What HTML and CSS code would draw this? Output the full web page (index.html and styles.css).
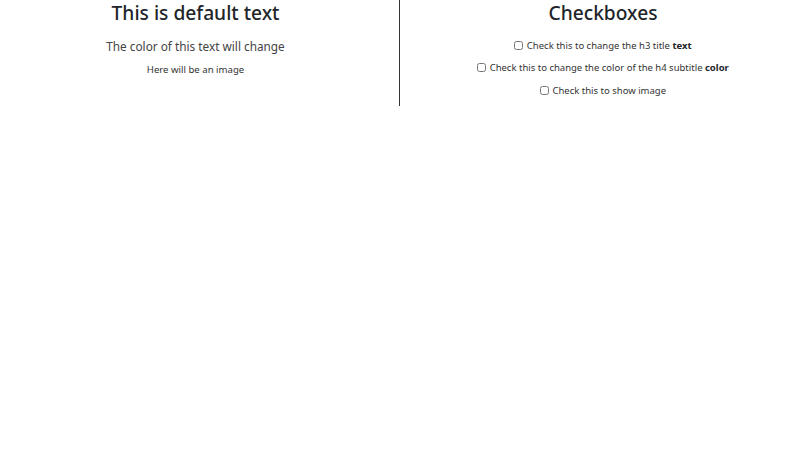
FILE: index.html
```html
<!DOCTYPE html>
<html>
<head>
<meta charset="utf-8">
<link rel="stylesheet" href="styles.css">
</head>
<body>
<div class="row">
  <div class="col col-left">
    <h3 class="title">This is default text</h3>
    <h4 class="subtitle">The color of this text will change</h4>
    <p class="note">Here will be an image</p>
  </div>
  <div class="col col-right">
    <h3 class="title">Checkboxes</h3>
    <label class="check"><input type="checkbox"> Check this to change the h3 title <b>text</b></label>
    <label class="check"><input type="checkbox"> Check this to change the color of the h4 subtitle <b>color</b></label>
    <label class="check"><input type="checkbox"> Check this to show image</label>
  </div>
</div>
</body>
</html>
```
FILE: styles.css
```css
html, body {
  margin: 0;
  padding: 0;
  background: #fff;
  color: #212529;
  font-family: "Noto Sans", "Open Sans", sans-serif;
}
.row {
  display: flex;
}
.col {
  width: 50%;
  display: flex;
  flex-direction: column;
  align-items: center;
  text-align: center;
  box-sizing: border-box;
}
.col-left {
  border-right: 1px solid #333;
  padding-bottom: 25px;
  padding-right: 8px;
}
.col-right {
  padding-left: 6px;
}
.title {
  font-size: 19.2px;
  font-weight: 500;
  line-height: 25px;
  margin: 0 0 13px 0;
}
.col-right .title {
  margin-bottom: 13.5px;
}
.subtitle {
  font-size: 11.8px;
  font-weight: 400;
  color: #444;
  margin: 0 0 9px 0;
  line-height: 16px;
}
.note {
  font-size: 9.6px;
  margin: 0;
  color: #333;
  line-height: 14px;
}
.check {
  display: block;
  font-size: 9.5px;
  line-height: 13px;
  margin-bottom: 9.5px;
  color: #333;
}
.check input {
  width: 9px;
  height: 9px;
  margin: 0 1px 0 0;
  vertical-align: -1px;
}
.check b { font-weight: 700; color: #212529; }
```
